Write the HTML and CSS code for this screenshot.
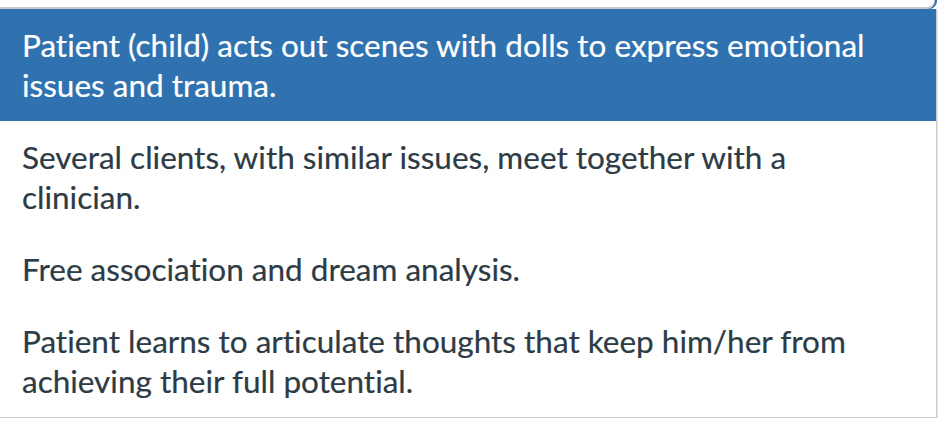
FILE: index.html
```html
<!DOCTYPE html>
<html>
<head>
<meta charset="utf-8">
<link rel="stylesheet" href="styles.css">
</head>
<body>
<div class="wrap">
  <div class="field"></div>
  <ul class="menu">
    <li class="opt active">Patient (child) acts out scenes with dolls to express emotional issues and trauma.</li>
    <li class="opt">Several clients, with similar issues, meet together with a clinician.</li>
    <li class="opt">Free association and dream analysis.</li>
    <li class="opt">Patient learns to articulate thoughts that keep him/her from achieving their full potential.</li>
  </ul>
</div>
</body>
</html>
```
FILE: styles.css
```css
html, body {
  margin: 0;
  padding: 0;
  background: #ffffff;
}
.wrap {
  width: 937px;
  font-family: Lato, "Noto Sans", sans-serif;
}
.field {
  height: 7px;
  width: 934px;
  background: #ffffff;
  border: 1px solid #c7cdd1;
  border-top: none;
  border-left: none;
  border-bottom: 2px solid #c7cdd1;
  border-bottom-right-radius: 8px;
  box-shadow: 2px 0 0 #2b6fb0;
}
.menu {
  list-style: none;
  margin: 0;
  padding: 0;
  width: 936px;
  background: #ffffff;
  border-right: 1px solid #c7cdd1;
  border-bottom: 1px solid #c7cdd1;
  box-shadow: 0 3px 4px rgba(0, 0, 0, 0.25);
}
.opt {
  padding: 16px 54px 16px 22px;
  font-size: 31.5px;
  line-height: 40px;
  color: #2d3b45;
  font-variant-ligatures: none;
  -webkit-text-stroke: 0.2px currentColor;
}
.opt.active {
  background: #3072b0;
  color: #ffffff;
}
```
